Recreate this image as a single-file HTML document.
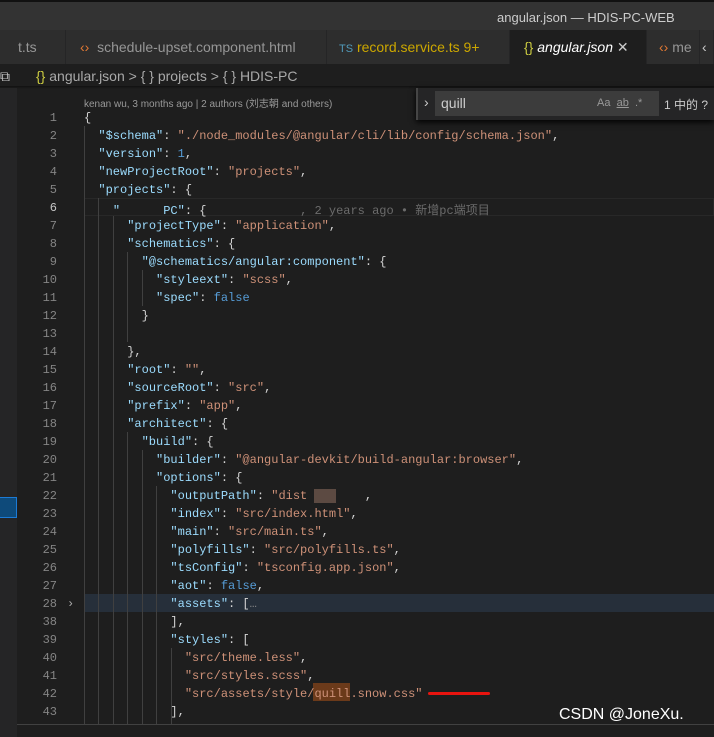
<!DOCTYPE html>
<html><head><meta charset="utf-8"><style>
*{margin:0;padding:0;box-sizing:border-box}
body{width:714px;height:737px;background:#1e1e1e;overflow:hidden;position:relative;font-family:"Liberation Sans","Noto Sans CJK SC",sans-serif}
.title{position:absolute;left:0;top:0;width:714px;height:30px;background:#333333;border-top:2px solid #111;color:#ccc;font-size:13px}
.title span{position:absolute;left:497px;top:8px}
.tabs{position:absolute;left:0;top:30px;width:714px;height:34px;background:#252526}
.tab{position:absolute;top:0;height:34px;background:#2d2d2d;color:#969696;font-size:14px;line-height:34px;white-space:nowrap;overflow:hidden;border-right:1px solid #252526}
.crumb{position:absolute;left:0;top:64px;width:714px;height:24px;color:#a9a9a9;font-size:14px;line-height:24px}
.left{position:absolute;left:0;top:88px;width:17px;height:649px;background:#252526}
.code{position:absolute;left:0;top:111px;font-family:"Liberation Mono","Noto Sans CJK SC",monospace;font-size:12px}
.ln{position:absolute;width:57px;text-align:right;color:#858585;left:0}
.l{position:absolute;left:84px;white-space:pre;color:#d4d4d4}
.k{color:#9cdcfe}.s{color:#ce9178}.b{color:#569cd6}
.g{position:absolute;width:1px;background:#404040}
</style></head><body>
<div class="title"><span>angular.json — HDIS-PC-WEB</span></div>
<div class="tabs">
<div class="tab" style="left:0;width:66px;padding-left:18px">t.ts</div>
<div class="tab" style="left:66px;width:261px;padding-left:14px"><span style="color:#e37933">‹›</span>&nbsp; schedule-upset.component.html</div>
<div class="tab" style="left:327px;width:183px;padding-left:12px"><span style="color:#519aba;font-size:11px">TS</span> <span style="color:#cca700">record.service.ts 9+</span></div>
<div class="tab" style="left:510px;width:137px;background:#1e1e1e;color:#fff;padding-left:14px"><span style="color:#cbcb41">{}</span> <i>angular.json</i> <span style="color:#ccc">✕</span></div>
<div class="tab" style="left:647px;width:53px;padding-left:12px"><span style="color:#e37933">‹›</span> me</div>
<div class="tab" style="left:700px;width:14px;color:#ccc;padding-left:2px">‹</div>
</div>
<div class="crumb"><span style="position:absolute;left:0;color:#ccc">⧉</span><span style="position:absolute;left:36px"><span style="color:#cbcb41">{}</span> angular.json &gt; { } projects &gt; { } HDIS-PC</span></div>
<div style="position:absolute;left:0;top:86px;width:714px;height:3px;background:linear-gradient(#111,#1e1e1e)"></div>
<div class="left"></div>
<div style="position:absolute;left:0;top:497px;width:17px;height:21px;background:#0e4a7a;border:1px solid #1c7bd6;border-left:none"></div>
<div style="position:absolute;left:84px;top:95px;color:#999;font-size:10px">kenan wu, 3 months ago | 2 authors (刘志朝 and others)</div>
<div style="position:absolute;left:416px;top:88px;width:298px;height:32px;background:#252526;box-shadow:0 2px 6px #000;border-left:2px solid #454545"></div>
<div style="position:absolute;left:424px;top:94px;color:#ccc;font-size:14px">›</div>
<div style="position:absolute;left:435px;top:91px;width:224px;height:25px;background:#3c3c3c;color:#ccc;font-size:14px;line-height:25px;padding-left:6px">quill<span style="position:absolute;left:162px;font-size:11px;color:#999">Aa &nbsp;<u>ab</u>&nbsp; .*</span></div>
<div style="position:absolute;left:664px;top:96px;color:#ccc;font-size:12px">1 中的 ?</div>
<div style="position:absolute;left:84px;top:198px;width:630px;height:18px;border:1px solid #282828"></div>
<div style="position:absolute;left:84px;top:594px;width:630px;height:18px;background:#262f3a"></div>
<div class="g" style="left:84px;top:126px;height:600px"></div>
<div class="g" style="left:98px;top:198px;height:528px"></div>
<div class="g" style="left:113px;top:216px;height:510px"></div>
<div class="g" style="left:127px;top:252px;height:90px"></div>
<div class="g" style="left:142px;top:270px;height:36px"></div>
<div class="g" style="left:127px;top:432px;height:294px"></div>
<div class="g" style="left:142px;top:450px;height:276px"></div>
<div class="g" style="left:156px;top:486px;height:240px"></div>
<div class="g" style="left:171px;top:648px;height:78px"></div>
<div style="position:absolute;left:17px;top:724px;width:697px;height:13px;background:#1e1e1e;border-top:1px solid #414141"></div>
<div style="position:absolute;left:313px;top:683px;width:37px;height:18px;background:#6b3a1a"></div>
<div class="code" id="c"></div>
<div style="position:absolute;left:428px;top:692px;width:62px;height:3px;background:#e8140f;border-radius:2px"></div>
<div style="position:absolute;left:559px;top:706px;color:#fff;font-size:16px">CSDN @JoneXu.</div>
<script>
var L=[
[1,'{'],[2,'  <span class=k>"$schema"</span>: <span class=s>"./node_modules/@angular/cli/lib/config/schema.json"</span>,'],
[3,'  <span class=k>"version"</span>: <span class=b>1</span>,'],[4,'  <span class=k>"newProjectRoot"</span>: <span class=s>"projects"</span>,'],
[5,'  <span class=k>"projects"</span>: {'],[6,'    <span class=k>"</span>      <span class=k>PC"</span>: {         <span style="color:#6b6b6b">    , 2 years ago • 新增pc端项目</span>'],
[7,'      <span class=k>"projectType"</span>: <span class=s>"application"</span>,'],[8,'      <span class=k>"schematics"</span>: {'],
[9,'        <span class=k>"@schematics/angular:component"</span>: {'],[10,'          <span class=k>"styleext"</span>: <span class=s>"scss"</span>,'],
[11,'          <span class=k>"spec"</span>: <span class=b>false</span>'],[12,'        }'],[13,''],[14,'      },'],
[15,'      <span class=k>"root"</span>: <span class=s>""</span>,'],[16,'      <span class=k>"sourceRoot"</span>: <span class=s>"src"</span>,'],
[17,'      <span class=k>"prefix"</span>: <span class=s>"app"</span>,'],[18,'      <span class=k>"architect"</span>: {'],
[19,'        <span class=k>"build"</span>: {'],[20,'          <span class=k>"builder"</span>: <span class=s>"@angular-devkit/build-angular:browser"</span>,'],
[21,'          <span class=k>"options"</span>: {'],[22,'            <span class=k>"outputPath"</span>: <span class=s>"dist <span style="background:#5c4a42">   </span>    </span>,'],
[23,'            <span class=k>"index"</span>: <span class=s>"src/index.html"</span>,'],[24,'            <span class=k>"main"</span>: <span class=s>"src/main.ts"</span>,'],
[25,'            <span class=k>"polyfills"</span>: <span class=s>"src/polyfills.ts"</span>,'],[26,'            <span class=k>"tsConfig"</span>: <span class=s>"tsconfig.app.json"</span>,'],
[27,'            <span class=k>"aot"</span>: <span class=b>false</span>,'],[28,'            <span class=k>"assets"</span>: [<span style="color:#888">…</span>'],
[38,'            ],'],[39,'            <span class=k>"styles"</span>: ['],[40,'              <span class=s>"src/theme.less"</span>,'],
[41,'              <span class=s>"src/styles.scss"</span>,'],[42,'              <span class=s>"src/assets/style/quill.snow.css"</span>'],[43,'            ],']];
var h='';L.forEach(function(r,i){var y=i*18;h+='<div class=ln style="top:'+y+'px;'+(r[0]==6?'color:#c6c6c6':'')+'">'+r[0]+'</div><div class=l style="top:'+y+'px">'+r[1]+'</div>';});
h+='<div style="position:absolute;left:67px;top:'+(27*18)+'px;color:#aaa">›</div>';
document.getElementById('c').innerHTML=h;
</script>
</body></html>
